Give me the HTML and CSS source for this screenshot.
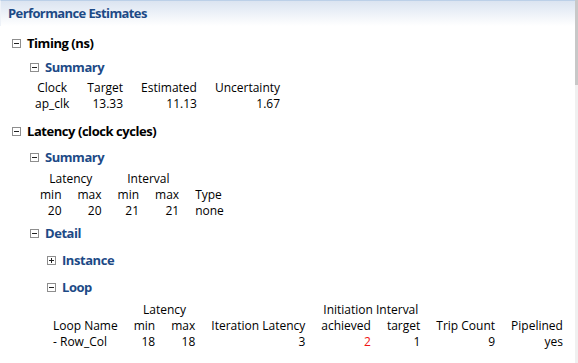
FILE: index.html
```html
<!DOCTYPE html>
<html lang="en">

<head>
    <meta charset="UTF-8">
    <title>Performance Estimates</title>
    <link rel="stylesheet" href="styles.css">
</head>

<body>
    <div class="page">
        <div class="report">
            <div class="head">Performance Estimates</div>

            <div class="title lvl1"><span class="tog minus"></span>Timing (ns)</div>
            <div class="sub">
                <div class="title lvl2 first"><span class="tog minus"></span>Summary</div>
                <table class="grid timing">
                    <tr><th class="c">Clock</th><th>Target</th><th>Estimated</th><th>Uncertainty</th></tr>
                    <tr><td class="c">ap_clk</td><td>13.33</td><td>11.13</td><td>1.67</td></tr>
                </table>
            </div>

            <div class="title lvl1 after"><span class="tog minus"></span>Latency (clock cycles)</div>
            <div class="sub">
                <div class="title lvl2"><span class="tog minus"></span>Summary</div>
                <table class="grid latency">
                    <tr><th colspan="2" class="c">Latency</th><th colspan="2" class="c">Interval</th><th></th></tr>
                    <tr><th>min</th><th>max</th><th>min</th><th>max</th><th class="l">Type</th></tr>
                    <tr><td>20</td><td>20</td><td>21</td><td>21</td><td class="l">none</td></tr>
                </table>

                <div class="title lvl2 detail"><span class="tog minus"></span>Detail</div>
                <div class="sub">
                    <div class="title lvl3"><span class="tog plus"></span>Instance</div>
                    <div class="title lvl3"><span class="tog minus"></span>Loop</div>
                    <table class="grid loops">
                        <tr><th></th><th colspan="2" class="c">Latency</th><th></th><th colspan="2" class="c">Initiation Interval</th><th></th><th></th></tr>
                        <tr><th class="l">Loop Name</th><th>min</th><th>max</th><th>Iteration Latency</th><th>achieved</th><th>target</th><th>Trip Count</th><th>Pipelined</th></tr>
                        <tr><td class="l">- Row_Col</td><td>18</td><td>18</td><td>3</td><td class="bad">2</td><td>1</td><td>9</td><td>yes</td></tr>
                    </table>
                </div>
            </div>
        </div>
        <div class="scroll"><div class="thumb"></div></div>
    </div>
</body>

</html>
```

FILE: styles.css
```css
*{margin: 0px;padding: 0px;box-sizing: border-box;}
body{font-family: "Open Sans", "Noto Sans", sans-serif;font-size: 12px;color: #000;background: #fff;overflow: hidden;}
.page{display: flex;width: 578px;height: 363px;overflow: hidden;}
.report{flex: 1;padding-bottom: 20px;}
.scroll{width: 3px;background: #f0f0f0;}
.thumb{height: 85px;background: #c8c8c8;}

.head{height: 26px;padding-left: 7px;line-height: 24px;font-size: 13px;font-weight: 700;letter-spacing: -0.6px;color: #1d4a86;border-top: 1px solid #bcd0e8;border-left: 1px solid #eef2f8;background: linear-gradient(#dbe4f1, #ffffff);}

.title{display: flex;align-items: center;height: 16px;font-weight: 700;font-size: 13px;letter-spacing: -0.45px;}
.lvl1{margin: 9px 0 0 12px;color: #000;}
.lvl2{margin: 10px 0 0 30px;color: #1d4a86;}
.lvl3{margin: 11px 0 0 47px;color: #1d4a86;}
.lvl2.first{margin-top: 8px;}
.lvl1.after{margin-top: 11px;}
.lvl2.detail{margin-top: 6px;}

.tog{position: relative;width: 9px;height: 9px;border: 1px solid #8e8e8e;margin-right: 6px;flex: none;}
.tog::before{content: "";position: absolute;left: 1px;top: 3px;width: 5px;height: 1px;background: #222;}
.plus::after{content: "";position: absolute;left: 3px;top: 1px;width: 1px;height: 5px;background: #222;}

.grid{border-collapse: collapse;margin-top: 5px;}
.grid th, .grid td{font-weight: 400;line-height: 16px;height: 16px;padding: 0 0 0 16px;text-align: right;white-space: nowrap;}
.grid .c{text-align: center;}
.grid .l{text-align: left;}
.grid .bad{color: #f01414;}

.timing{margin-left: 17px;}
.timing th, .timing td{padding-left: 18px;}
.latency{margin-top: 6px;margin-left: 24px;}
.loops{margin-top: 7px;margin-left: 37px;}
.loops tr > :first-child{padding-left: 16px;}
```
